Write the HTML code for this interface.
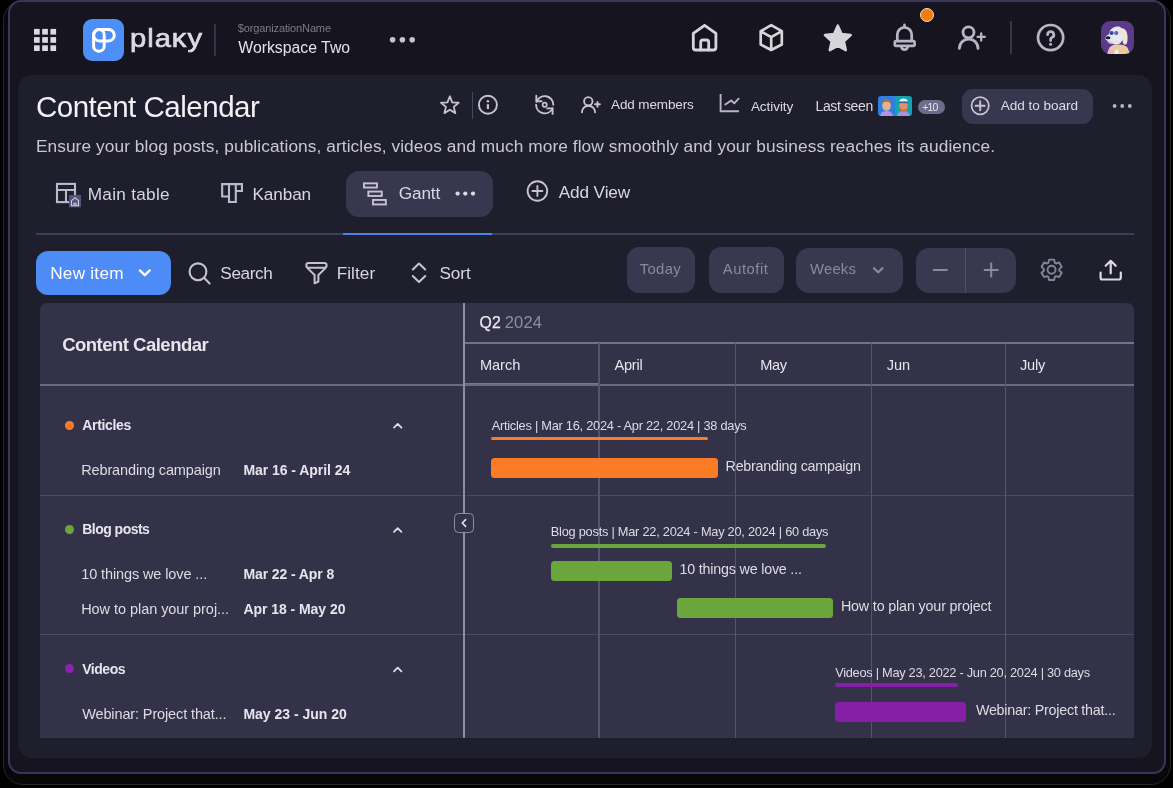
<!DOCTYPE html>
<html><head><meta charset="utf-8">
<style>
*{margin:0;padding:0;box-sizing:border-box}
html,body{width:1173px;height:788px;background:#000;overflow:hidden;font-family:"Liberation Sans",sans-serif;color:#e6e5ec}
.a{position:absolute;white-space:nowrap}
#root{position:absolute;left:0;top:0;width:1173px;height:788px;will-change:transform}
#shadow{position:absolute;left:3px;top:0;width:1168px;height:784.5px;border-radius:20px;background:#08080a;border:1px solid #262624}
#win{position:absolute;left:7.6px;top:-0.5px;width:1158.6px;height:774px;border-radius:13px;background:#16151f;border:2.2px solid #38375a}
#panel{position:absolute;left:18px;top:75px;width:1134px;height:682.5px;border-radius:14px;background:#1f1e2c}
svg{position:absolute;overflow:visible}
.ic{fill:none;stroke:#dcdbe3;stroke-width:2.2;stroke-linecap:round;stroke-linejoin:round}
.btn{position:absolute;background:#3a3850;border-radius:12px}
</style></head><body><div id="root">
<div id="shadow"></div>
<div id="win"></div>
<div id="panel"></div>

<!-- logo bg -->
<div class="a" style="left:83.3px;top:19px;width:41px;height:41.5px;border-radius:9px;background:#4d8ef7"></div>
<div class="a" style="left:214px;top:24px;width:1.5px;height:32px;background:#34334a"></div>
<div class="a" style="left:1010px;top:21px;width:2px;height:33px;background:#38374a"></div>
<div class="a" style="left:471.8px;top:92px;width:1.5px;height:27px;background:#48465c"></div>

<!-- orange notif dot -->
<div class="a" style="left:919.9px;top:8.3px;width:14px;height:14px;border-radius:7px;background:#f77c08;border:1.5px solid #e9e2dc"></div>

<!-- avatar -->
<div class="a" style="left:1101px;top:21px;width:33px;height:33px;border-radius:9px;background:#5b3a8b;overflow:hidden">
<svg style="left:0;top:0" width="33" height="33" viewBox="0 0 33 33">
  <path fill="#efc99e" d="M6 33 L8.5 26.5 Q12 23 16 23.5 Q23 23 26.5 26.5 L29 33 Z"/>
  <path fill="#e6b6d6" d="M6 33 L8 28.5 Q10.5 28 13 30 L13.5 33 Z"/>
  <path fill="#ecebf3" d="M13 33 L14.5 28.5 L17 28.5 L18 33 Z"/>
  <path fill="#e7e6f1" d="M9 9.5 Q12.5 4.8 18 5.5 Q21.5 6.5 21.5 12 L21 20 Q18.5 24 14 23.5 Q9.5 22.5 7.5 20.5 Q4 19 4.3 16.8 Q4.8 14.5 7.8 13.5 Z"/>
  <path fill="#b9bde0" d="M5.5 18.5 Q9 21 13 22.5 Q10 24 7 21.5 Z"/>
  <path fill="#ede6d6" d="M18.5 7 Q23.5 6.5 25.5 10.5 Q27.5 16 26 22 Q24.5 25 22.5 23 Q20.5 18 19.5 12 Z"/>
  <circle cx="10.6" cy="12" r="2.1" fill="#34499a"/>
  <circle cx="15.3" cy="12" r="2.1" fill="#6a5cb4"/>
  <ellipse cx="7" cy="16.8" rx="2.5" ry="1.5" fill="#1b1b22"/>
</svg>
</div>

<!-- last seen avatars -->
<div class="a" style="left:878px;top:96px;width:34px;height:20px;border-radius:3px;overflow:hidden">
<svg style="left:0;top:0" width="34" height="20" viewBox="0 0 34 20">
  <rect x="0" y="0" width="17" height="20" fill="#2f7fe0"/>
  <rect x="17" y="0" width="17" height="20" fill="#13a3ad"/>
  <path fill="#b392ec" d="M2 20 Q3 15 8.5 15 Q14 15 15 20 Z"/>
  <ellipse cx="8.5" cy="9.5" rx="4.3" ry="5.3" fill="#e7b08c"/>
  <path fill="#a8704a" d="M4 8 Q4 3 8.5 3 Q13 3 13 8 Q11 5.5 8.5 5.8 Q6 5.5 4 8 Z"/>
  <path fill="#a98ee6" d="M19 20 Q20 15 25.5 15 Q31 15 32 20 Z"/>
  <ellipse cx="25.5" cy="10" rx="4.3" ry="5.3" fill="#e2925c"/>
  <path fill="#d46a3c" d="M21.5 11 Q25.5 17 29.5 11 L29 14 Q25.5 17.5 22 14 Z"/>
  <path fill="#eef0f8" d="M21 6.5 Q21 2.5 25.5 2.5 Q30 2.5 30 6.5 Z"/>
  <rect x="21" y="5.5" width="9" height="1.6" fill="#3557b8"/>
</svg>
</div>
<div class="a" style="left:917.5px;top:100px;width:27.5px;height:14px;border-radius:7px;background:#6e6b8b"></div>

<!-- buttons / pills -->
<div class="a" style="left:962.3px;top:88.9px;width:130.7px;height:34.7px;border-radius:11px;background:#393750"></div>
<div class="a" style="left:346.4px;top:170.6px;width:147px;height:46.4px;border-radius:13px;background:#393750"></div>
<div class="a" style="left:36px;top:232.8px;width:1098px;height:1.8px;background:#3f3d5c"></div>
<div class="a" style="left:343px;top:232.8px;width:149px;height:1.8px;background:#4a84e4"></div>
<div class="a" style="left:35.6px;top:250.6px;width:135.4px;height:44.1px;border-radius:12px;background:#4d8bf7"></div>

<div class="btn" style="left:626.5px;top:247.3px;width:68.3px;height:45.7px"></div>
<div class="btn" style="left:708.9px;top:247.3px;width:75px;height:45.7px"></div>
<div class="btn" style="left:796.2px;top:247.6px;width:106.7px;height:45px;border-radius:13px"></div>
<div class="btn" style="left:916px;top:247.6px;width:100px;height:45px;border-radius:13px"></div>
<div class="a" style="left:965px;top:247.6px;width:1px;height:45px;background:#4f4d68"></div>

<!-- gantt -->
<div class="a" style="left:40.2px;top:303px;width:1093.7px;height:435px;background:#343249;border-radius:7px 7px 0 0"></div>
<div class="a" style="left:40px;top:384.3px;width:424px;height:1.7px;background:#6b6986"></div>
<div class="a" style="left:464px;top:342.1px;width:670px;height:1.8px;background:#73718c"></div>
<div class="a" style="left:464px;top:384.3px;width:670px;height:1.7px;background:#6b6986"></div>
<div class="a" style="left:464px;top:382.9px;width:134px;height:1.5px;background:#4a80dc"></div>
<div class="a" style="left:40px;top:495px;width:1094px;height:1.2px;background:#4b4966"></div>
<div class="a" style="left:40px;top:634px;width:1094px;height:1.2px;background:#4b4966"></div>
<div class="a" style="left:463px;top:303px;width:1.9px;height:435px;background:#8d8ba7"></div>
<div class="a" style="left:598.2px;top:343px;width:1.7px;height:395px;background:#55546f"></div>
<div class="a" style="left:734.5px;top:343px;width:1.7px;height:395px;background:#55546f"></div>
<div class="a" style="left:870.5px;top:343px;width:1.7px;height:395px;background:#55546f"></div>
<div class="a" style="left:1004.6px;top:343px;width:1.7px;height:395px;background:#55546f"></div>

<!-- dots -->
<div class="a" style="left:65px;top:421.1px;width:9px;height:9px;border-radius:5px;background:#fb7b26"></div>
<div class="a" style="left:65px;top:524.8px;width:9px;height:9px;border-radius:5px;background:#6aa63b"></div>
<div class="a" style="left:65px;top:664px;width:9px;height:9px;border-radius:5px;background:#8a24b0"></div>

<!-- collapse button -->
<div class="a" style="left:453.8px;top:512.8px;width:20.4px;height:20.4px;border-radius:4.5px;background:#343249;border:1.2px solid #8d8ba7"></div>

<!-- bars -->
<div class="a" style="left:491px;top:436.8px;width:216.5px;height:3.6px;border-radius:2px;background:#fb7b26"></div>
<div class="a" style="left:491.4px;top:457.5px;width:226.3px;height:20.5px;border-radius:3.5px;background:#fb7b26"></div>
<div class="a" style="left:551px;top:543.8px;width:274.5px;height:3.8px;border-radius:2px;background:#6aa63b"></div>
<div class="a" style="left:551px;top:560.8px;width:120.8px;height:20.2px;border-radius:3.5px;background:#6aa63b"></div>
<div class="a" style="left:676.5px;top:598.2px;width:156.3px;height:19.9px;border-radius:3.5px;background:#6aa63b"></div>
<div class="a" style="left:834.7px;top:683.1px;width:123.5px;height:3.6px;border-radius:2px;background:#8520a6"></div>
<div class="a" style="left:834.7px;top:701.5px;width:131.5px;height:20.5px;border-radius:3.5px;background:#8520a6"></div>

<!-- ICONS overlay (page coordinates) -->
<svg style="left:0;top:0" width="1173" height="788" viewBox="0 0 1173 788">
<rect x="34.0" y="28.9" width="5.7" height="5.7" fill="#dcdbe3"/><rect x="34.0" y="37.1" width="5.7" height="5.7" fill="#dcdbe3"/><rect x="34.0" y="45.3" width="5.7" height="5.7" fill="#dcdbe3"/><rect x="42.2" y="28.9" width="5.7" height="5.7" fill="#dcdbe3"/><rect x="42.2" y="37.1" width="5.7" height="5.7" fill="#dcdbe3"/><rect x="42.2" y="45.3" width="5.7" height="5.7" fill="#dcdbe3"/><rect x="50.4" y="28.9" width="5.7" height="5.7" fill="#dcdbe3"/><rect x="50.4" y="37.1" width="5.7" height="5.7" fill="#dcdbe3"/><rect x="50.4" y="45.3" width="5.7" height="5.7" fill="#dcdbe3"/>
<g fill="none" stroke="#fff" stroke-width="3"><rect x="93.6" y="29.4" width="20.7" height="11.6" rx="5.8"/><rect x="93.6" y="29.4" width="10.6" height="21.8" rx="5.3"/></g>
<circle cx="392.6" cy="39.7" r="2.8" fill="#c5c4cf"/><circle cx="402.4" cy="39.7" r="2.8" fill="#c5c4cf"/><circle cx="412.2" cy="39.7" r="2.8" fill="#c5c4cf"/>
<g class="ic" style="stroke-width:2.8;stroke:#d6d5dc"><path d="M693.3 33.3 L704.6 25.3 L715.9 33.3 V47.5 a2.5 2.5 0 0 1 -2.5 2.5 H695.8 a2.5 2.5 0 0 1 -2.5 -2.5 Z"/><path d="M700.7 50 V42.2 a2.2 2.2 0 0 1 2.2 -2.2 h3.6 a2.2 2.2 0 0 1 2.2 2.2 V50"/></g>
<g class="ic" style="stroke-width:2.7;stroke:#d6d5dc"><path d="M771.2 25.2 L781.8 31.2 V44.5 L771.2 50 L760.7 44.5 V31.2 Z M760.7 31.2 L771.2 37.2 L781.8 31.2 M771.2 37.2 V50"/></g>
<path fill="#d6d5dc" stroke="#d6d5dc" stroke-width="2.6" stroke-linejoin="round" d="M837.80 25.70 L841.53 34.07 L850.64 35.03 L843.83 41.16 L845.74 50.12 L837.80 45.55 L829.86 50.12 L831.77 41.16 L824.96 35.03 L834.07 34.07 Z"/>
<g class="ic" style="stroke-width:2.7;stroke:#b7b5c6"><path d="M904.5 24.9 V26.6"/><path d="M897.3 40.8 V34.6 a7.2 7.2 0 0 1 14.4 0 V40.8"/><rect x="894.8" y="41.1" width="19.8" height="4.7" rx="1.3"/><path d="M901.3 46.3 a3.2 3.4 0 0 0 6.4 0"/></g>
<g class="ic" style="stroke-width:2.8;stroke:#b7b5c6"><circle cx="968.5" cy="32.3" r="5.5"/><path d="M959.4 48.4 A9.3 9.3 0 0 1 978 48.4"/><path style="stroke-width:2.3" d="M981.2 33.3 V40.5 M977.6 36.9 H984.8"/></g>
<g class="ic" style="stroke-width:2.7;stroke:#b7b5c6"><circle cx="1050.6" cy="37.6" r="12.6"/><path style="stroke-width:2.7" d="M1047.6 34.7 a3.1 3.1 0 1 1 4.4 2.8 c-.9 .45 -1.4 1 -1.4 2 V40.6"/></g><circle cx="1050.6" cy="44.3" r="1.5" fill="#b7b5c6"/>
<path class="ic" style="stroke-width:1.8;stroke:#c5c3d2" d="M449.85 96.30 L452.26 102.29 L458.69 102.73 L453.74 106.86 L455.32 113.12 L449.85 109.69 L444.38 113.12 L445.96 106.86 L441.01 102.73 L447.44 102.29 Z"/>
<g class="ic" style="stroke-width:1.9;stroke:#c5c3d2"><circle cx="487.9" cy="104.7" r="9"/><path style="stroke-width:2.2;stroke-linecap:butt" d="M487.9 104.2 V109"/></g><circle cx="487.9" cy="101.3" r="1.25" fill="#c5c3d2"/>
<g class="ic" style="stroke-width:1.9;stroke:#c5c3d2"><path d="M536.6 101.8 A8.6 8.6 0 0 1 553.3 104.7"/><path d="M536.3 95.8 V101.3 H541.6"/><path d="M536.1 104.7 A8.6 8.6 0 0 0 552.5 108.3"/><path d="M552.6 113.9 V108.4 H547.2"/><circle style="stroke-width:1.7" cx="544.7" cy="104.7" r="2.1"/></g>
<g class="ic" style="stroke-width:1.9;stroke:#c5c3d2"><circle cx="588.3" cy="101.3" r="4.2"/><path d="M581.9 112.3 A6.6 6.6 0 0 1 595.1 112.3"/><path style="stroke-width:1.9" d="M597.5 101.9 V106.7 M595.1 104.3 H599.9"/></g>
<g class="ic" style="stroke-width:1.9;stroke:#b7b5c6;stroke-linecap:butt"><path d="M720.6 94 V111.3 H739"/><path style="stroke-linecap:round" d="M725.3 104.6 L731.2 100.4 L734.2 103.4 L738.6 98.7"/></g>
<g class="ic" style="stroke-width:1.8;stroke:#c5c3d2"><circle cx="980.2" cy="105.8" r="8.6"/><path style="stroke-width:1.9" d="M980.2 101.3 V110.3 M975.7 105.8 H984.7"/></g>
<circle cx="1114.6" cy="106" r="1.9" fill="#b5b3c4"/><circle cx="1122.2" cy="106" r="1.9" fill="#b5b3c4"/><circle cx="1129.8" cy="106" r="1.9" fill="#b5b3c4"/>
<g class="ic" style="stroke-width:2.1;stroke:#bbb9cc;stroke-linecap:butt;stroke-linejoin:miter"><rect x="57" y="183.9" width="18" height="18.2"/><path d="M57 190 H75 M66 190 V202"/></g><rect x="69" y="195" width="12" height="12.3" fill="#55537a"/><g fill="none" stroke="#cfcde0" stroke-width="1.1" stroke-linejoin="round"><path d="M71.5 205.8 V200.6 L75 197.6 L78.5 200.6 V205.8 Z"/><path d="M74 205.8 V203.2 H76 V205.8"/></g>
<path class="ic" style="stroke-width:2.1;stroke:#bbb9cc;stroke-linecap:butt;stroke-linejoin:miter" d="M222.15 184.15 H241.95 V190.95 H235.8 V201.95 H229 V196.45 H222.15 Z M229 184.15 V196.45 M235.8 184.15 V190.95"/>
<g class="ic" style="stroke-width:1.9;stroke:#c5c3d2;stroke-linejoin:miter"><rect x="363.95" y="183.35" width="13" height="4.2"/><rect x="368.35" y="191.55" width="13.4" height="4.4"/><rect x="372.95" y="199.95" width="12.9" height="4.5"/></g>
<circle cx="457.6" cy="193.6" r="2.15" fill="#dad9e2"/><circle cx="465.3" cy="193.6" r="2.15" fill="#dad9e2"/><circle cx="473" cy="193.6" r="2.15" fill="#dad9e2"/>
<g class="ic" style="stroke-width:1.9;stroke:#c5c3d2"><circle cx="537.4" cy="191" r="9.8"/><path d="M537.4 186 V196 M532.4 191 H542.4"/></g>
<path fill="none" stroke="#fff" stroke-width="2.4" stroke-linecap="round" stroke-linejoin="round" d="M139.9 270.4 L144.8 275.2 L149.7 270.4"/>
<g class="ic" style="stroke-width:2.1;stroke:#c5c3d2"><circle cx="198" cy="271.8" r="8.4"/><path d="M204.3 278.1 L209.6 283.4"/></g>
<g class="ic" style="stroke-width:2;stroke:#c5c3d2"><rect x="306.3" y="263.1" width="20.3" height="4.6" rx="2.3"/><path d="M307.8 268.4 L314.6 275 V283.3 L318.4 281.5 V275 L325.2 268.4"/></g>
<path class="ic" style="stroke-width:2.1;stroke:#c5c3d2" d="M412.8 269.5 L419 263.6 L425.2 269.5 M412.8 276 L419 281.9 L425.2 276"/>
<path fill="none" stroke="#8b899c" stroke-width="2.2" stroke-linecap="round" stroke-linejoin="round" d="M874 268.2 L878.2 272.3 L882.4 268.2"/>
<g stroke="#8b899c" stroke-width="2" fill="none"><path d="M933 270 H947.7"/><path d="M983.8 270 H998.6 M991.2 262.6 V277.5"/></g>
<g class="ic" style="stroke-width:1.9;stroke:#868499"><path d="M1048.35 262.82 L1049.06 259.61 L1054.14 259.61 L1054.85 262.82 L1056.02 263.49 L1059.15 262.51 L1061.69 266.91 L1059.27 269.13 L1059.27 270.47 L1061.69 272.69 L1059.15 277.09 L1056.02 276.11 L1054.85 276.78 L1054.14 279.99 L1049.06 279.99 L1048.35 276.78 L1047.18 276.11 L1044.05 277.09 L1041.51 272.69 L1043.93 270.47 L1043.93 269.13 L1041.51 266.91 L1044.05 262.51 L1047.18 263.49 Z"/><circle cx="1051.6" cy="269.8" r="4"/></g>
<g class="ic" style="stroke-width:2.2;stroke:#dcdbe3"><path d="M1110.7 261.4 V273.3 M1105.7 265.8 L1110.7 260.8 L1115.7 265.8"/><path d="M1100.6 272.6 V277.7 a1.8 1.8 0 0 0 1.8 1.8 H1119 a1.8 1.8 0 0 0 1.8 -1.8 V272.6"/></g>
<path fill="none" stroke="#e0dfe7" stroke-width="1.8" stroke-linecap="round" stroke-linejoin="round" d="M394 427.6 L397.7 423.9 L401.4 427.6"/>
<path fill="none" stroke="#e0dfe7" stroke-width="1.8" stroke-linecap="round" stroke-linejoin="round" d="M394 531.8 L397.7 528.1 L401.4 531.8"/>
<path fill="none" stroke="#e0dfe7" stroke-width="1.8" stroke-linecap="round" stroke-linejoin="round" d="M394 671.3 L397.7 667.6 L401.4 671.3"/>
<path fill="none" stroke="#e6e5ec" stroke-width="1.6" stroke-linecap="round" stroke-linejoin="round" d="M465.6 519.6 L462.3 523 L465.6 526.4"/>
</svg>

<div class="a" style="left:237.80px;top:22.40px;font-size:11px;letter-spacing:-0.136px;color:#7d7b8c;">$organizationName</div>
<div class="a" style="left:238.30px;top:38.90px;font-size:15.8px;letter-spacing:0.000px;color:#e3e2ea;">Workspace Two</div>
<div class="a" style="left:129.90px;top:23.30px;font-size:26.5px;letter-spacing:0.892px;color:#dcdbe2;-webkit-text-stroke:0.7px #dcdbe2;transform:scaleX(1.1);transform-origin:0 0;">plaĸy</div>
<div class="a" style="left:35.90px;top:90.10px;font-size:29.5px;letter-spacing:-0.487px;color:#f2f1f6;">Content Calendar</div>
<div class="a" style="left:35.90px;top:135.60px;font-size:17.3px;letter-spacing:0.083px;color:#c9c8d2;">Ensure your blog posts, publications, articles, videos and much more flow smoothly and your business reaches its audience.</div>
<div class="a" style="left:611.10px;top:97.30px;font-size:13.5px;letter-spacing:-0.128px;color:#dcdbe3;">Add members</div>
<div class="a" style="left:750.90px;top:98.70px;font-size:13.6px;letter-spacing:-0.093px;color:#dcdbe3;">Activity</div>
<div class="a" style="left:815.50px;top:98.30px;font-size:14px;letter-spacing:-0.378px;color:#dcdbe3;">Last seen</div>
<div class="a" style="left:1000.70px;top:98.20px;font-size:13.6px;letter-spacing:-0.035px;color:#dcdbe3;">Add to board</div>
<div class="a" style="left:922.30px;top:100.50px;font-size:10.5px;letter-spacing:-0.886px;color:#e8e7ee;">+10</div>
<div class="a" style="left:87.70px;top:184.30px;font-size:17.2px;letter-spacing:0.284px;color:#d8d7e0;">Main table</div>
<div class="a" style="left:252.40px;top:184.30px;font-size:17.2px;letter-spacing:-0.100px;color:#d8d7e0;">Kanban</div>
<div class="a" style="left:398.80px;top:182.80px;font-size:17.2px;letter-spacing:-0.140px;color:#dad9e2;">Gantt</div>
<div class="a" style="left:558.70px;top:181.50px;font-size:17.2px;letter-spacing:-0.112px;color:#d8d7e0;">Add View</div>
<div class="a" style="left:50.20px;top:262.80px;font-size:17.2px;letter-spacing:0.241px;color:#ffffff;">New item</div>
<div class="a" style="left:220.30px;top:263.40px;font-size:17.2px;letter-spacing:-0.380px;color:#d8d7e0;">Search</div>
<div class="a" style="left:336.70px;top:263.40px;font-size:17.2px;letter-spacing:0.046px;color:#d8d7e0;">Filter</div>
<div class="a" style="left:439.40px;top:263.40px;font-size:17.2px;letter-spacing:-0.082px;color:#d8d7e0;">Sort</div>
<div class="a" style="left:639.80px;top:261.00px;font-size:14.8px;letter-spacing:0.328px;color:#8b899c;">Today</div>
<div class="a" style="left:722.80px;top:261.00px;font-size:14.8px;letter-spacing:0.527px;color:#8b899c;">Autofit</div>
<div class="a" style="left:810.10px;top:261.20px;font-size:14.8px;letter-spacing:0.186px;color:#8b899c;">Weeks</div>
<div class="a" style="left:62.20px;top:333.90px;font-size:18.5px;font-weight:bold;letter-spacing:-0.512px;color:#e6e5ed;">Content Calendar</div>
<div class="a" style="left:479.50px;top:313.80px;font-size:15.8px;letter-spacing:0.213px;color:#ecebf2;-webkit-text-stroke:0.25px #ecebf2;">Q2</div>
<div class="a" style="left:504.70px;top:312.80px;font-size:16.5px;letter-spacing:0.190px;color:#8e8ca2;">2024</div>
<div class="a" style="left:479.90px;top:356.70px;font-size:14.6px;letter-spacing:-0.032px;color:#e6e5ec;">March</div>
<div class="a" style="left:614.40px;top:356.70px;font-size:14.6px;letter-spacing:-0.213px;color:#e6e5ec;">April</div>
<div class="a" style="left:760.20px;top:356.70px;font-size:14.6px;letter-spacing:-0.337px;color:#e6e5ec;">May</div>
<div class="a" style="left:886.80px;top:356.70px;font-size:14.6px;letter-spacing:-0.107px;color:#e6e5ec;">Jun</div>
<div class="a" style="left:1019.90px;top:356.70px;font-size:14.6px;letter-spacing:-0.185px;color:#e6e5ec;">July</div>
<div class="a" style="left:82.20px;top:417.10px;font-size:14px;font-weight:bold;letter-spacing:-0.310px;color:#e6e5ed;">Articles</div>
<div class="a" style="left:81.20px;top:462.00px;font-size:14.5px;letter-spacing:-0.128px;color:#dddce4;">Rebranding campaign</div>
<div class="a" style="left:243.40px;top:462.00px;font-size:14px;font-weight:bold;letter-spacing:-0.048px;color:#e6e5ed;">Mar 16 - April 24</div>
<div class="a" style="left:82.20px;top:521.30px;font-size:14px;font-weight:bold;letter-spacing:-0.516px;color:#e6e5ed;">Blog posts</div>
<div class="a" style="left:81.20px;top:566.20px;font-size:14.5px;letter-spacing:-0.106px;color:#dddce4;">10 things we love ...</div>
<div class="a" style="left:243.40px;top:566.20px;font-size:14px;font-weight:bold;letter-spacing:-0.092px;color:#e6e5ed;">Mar 22 - Apr 8</div>
<div class="a" style="left:81.20px;top:600.90px;font-size:14.5px;letter-spacing:-0.055px;color:#dddce4;">How to plan your proj...</div>
<div class="a" style="left:243.40px;top:600.90px;font-size:14px;font-weight:bold;letter-spacing:-0.045px;color:#e6e5ed;">Apr 18 - May 20</div>
<div class="a" style="left:82.20px;top:660.80px;font-size:14px;font-weight:bold;letter-spacing:-0.453px;color:#e6e5ed;">Videos</div>
<div class="a" style="left:82.20px;top:705.70px;font-size:14.5px;letter-spacing:-0.126px;color:#dddce4;">Webinar: Project that...</div>
<div class="a" style="left:243.40px;top:705.70px;font-size:14px;font-weight:bold;letter-spacing:-0.007px;color:#e6e5ed;">May 23 - Jun 20</div>
<div class="a" style="left:491.70px;top:418.30px;font-size:12.8px;letter-spacing:-0.255px;color:#dddce5;">Articles | Mar 16, 2024 - Apr 22, 2024 | 38 days</div>
<div class="a" style="left:725.60px;top:458.10px;font-size:14.3px;letter-spacing:-0.252px;color:#dddce4;">Rebranding campaign</div>
<div class="a" style="left:550.80px;top:524.30px;font-size:12.8px;letter-spacing:-0.246px;color:#dddce5;">Blog posts | Mar 22, 2024 - May 20, 2024 | 60 days</div>
<div class="a" style="left:679.60px;top:561.20px;font-size:14.3px;letter-spacing:-0.204px;color:#dddce4;">10 things we love ...</div>
<div class="a" style="left:840.90px;top:598.00px;font-size:14.3px;letter-spacing:-0.152px;color:#dddce4;">How to plan your project</div>
<div class="a" style="left:835.20px;top:664.70px;font-size:12.8px;letter-spacing:-0.280px;color:#dddce5;">Videos | May 23, 2022 - Jun 20, 2024 | 30 days</div>
<div class="a" style="left:975.90px;top:702.10px;font-size:14.3px;letter-spacing:-0.230px;color:#dddce4;">Webinar: Project that...</div>
</div></body></html>
